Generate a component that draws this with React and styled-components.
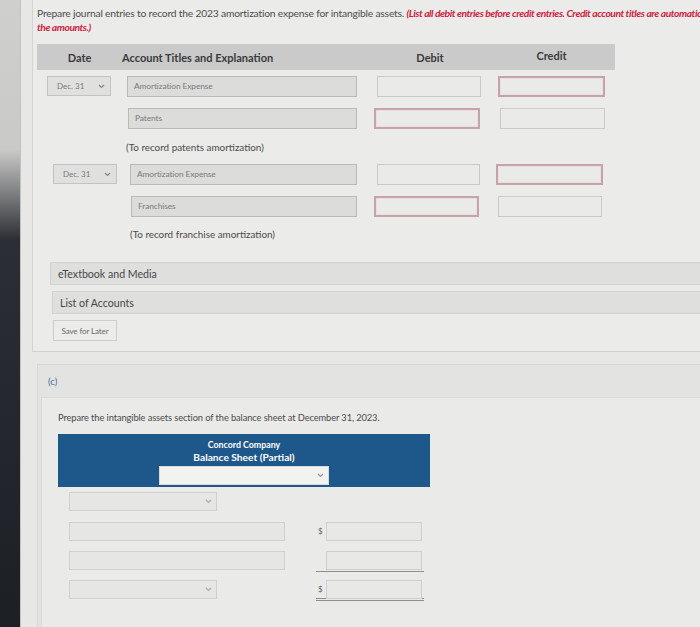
import React from "react";
import styled, { createGlobalStyle, css } from "styled-components";

const Global = createGlobalStyle`
  html, body { margin: 0; padding: 0; }
  body {
    background: #e7e7e5;
    font-family: Lato, "Open Sans", "Liberation Sans", sans-serif;
    color: #4a4a4a;
  }
`;

const Page = styled.div`
  display: flex;
  width: 700px;
  height: 627px;
  overflow: hidden;
  background: #e7e7e5;
`;

const Bezel = styled.div`
  flex: 0 0 20px;
  background: linear-gradient(
    to bottom,
    #cfcfcd 0px,
    #c9c9c7 150px,
    #2b2e34 240px,
    #1c1f24 100%
  );
  border-right: 1px solid #c2c2c0;
`;

const Main = styled.div`
  flex: 1;
  min-width: 0;
  padding-left: 11px;
  display: flex;
  flex-direction: column;
`;

const PanelB = styled.div`
  background: #ebebe9;
  border-left: 1px solid #d4d4d2;
  border-bottom: 1px solid #d2d2d0;
  padding: 6px 0 10px 4px;
  width: 700px;
`;

const Instr = styled.div`
  font-size: 10.3px;
  line-height: 14px;
  white-space: nowrap;
  overflow: hidden;
  color: #4d4d4d;
  letter-spacing: -0.2px;
`;

const Warn = styled.span`
  color: #cf1d43;
  font-style: italic;
  font-weight: 700;
  letter-spacing: -0.45px;
`;

const Grid = styled.div`
  display: grid;
  grid-template-columns: 85px 250px 116px 127px;
  width: 578px;
`;

const Head = styled(Grid)`
  margin-top: 10px;
  height: 26px;
  background: #c9cac9;
  align-items: center;
  font-weight: 700;
  font-size: 11px;
  color: #3a3a3a;
`;

const HeadCell = styled.div`
  text-align: ${(p) => p.$align || "center"};
  padding-bottom: ${(p) => (p.$up ? "3px" : "0")};
`;

const Row = styled(Grid)`
  margin-top: ${(p) => p.$mt}px;
  height: 22px;
  align-items: center;
`;

const DateSelect = styled.div`
  margin-left: ${(p) => p.$ml}px;
  width: 64px;
  height: 20px;
  box-sizing: border-box;
  border: 1px solid #c3c3c1;
  background: #e0e0de;
  display: flex;
  align-items: center;
  justify-content: space-between;
  padding: 0 5px 0 9px;
  font-size: 8px;
  color: #7a7a7a;
`;

const Chevron = styled.svg`
  width: 7px;
  height: 5px;
`;

const AcctInput = styled.div`
  margin-left: ${(p) => p.$ml}px;
  width: ${(p) => p.$w}px;
  height: 21px;
  box-sizing: border-box;
  border: 1px solid #b9b9b7;
  background: #dcdcda;
  display: flex;
  align-items: center;
  padding-left: 6px;
  font-size: 8.4px;
  color: #7b7b7b;
  letter-spacing: -0.1px;
`;

const Amt = styled.div`
  margin-left: ${(p) => p.$ml}px;
  width: ${(p) => p.$w}px;
  height: 21px;
  box-sizing: border-box;
  background: #eaeae8;
  ${(p) =>
    p.$err
      ? css`
          border: 2px solid #c6a3a8;
          box-shadow: inset 0 0 0 1px #ecdfe0;
        `
      : css`
          border: 1px solid #c9c9c7;
        `}
`;

const Explain = styled.div`
  margin: ${(p) => p.$mt}px 0 0 ${(p) => p.$ml}px;
  height: 12px;
  line-height: 12px;
  font-size: 9.9px;
  color: #4a4a4a;
`;

const Bar = styled.div`
  margin: ${(p) => p.$mt}px 0 0 ${(p) => p.$ml}px;
  height: 23px;
  box-sizing: border-box;
  border: 1px solid #d3d3d1;
  background: #dfdfdd;
  display: flex;
  align-items: center;
  padding-left: 7px;
  font-size: 10.6px;
  color: #474747;
`;

const SaveBtn = styled.div`
  margin: 6px 0 0 16px;
  width: 64px;
  height: 21px;
  box-sizing: border-box;
  border: 1px solid #cdcdcb;
  background: #ececea;
  display: flex;
  align-items: center;
  justify-content: center;
  font-size: 8px;
  color: #6a6a6a;
  letter-spacing: -0.1px;
`;

const SectionC = styled.div`
  margin: 12px 0 0 5px;
  background: #e3e3e1;
  border-top: 1px solid #d6d6d4;
  border-left: 1px solid #d6d6d4;
  padding: 11px 0 0 3px;
  flex: 1;
  display: flex;
  flex-direction: column;
`;

const Label = styled.div`
  margin-left: 7px;
  font-size: 9.5px;
  color: #3f6f92;
  height: 12px;
  line-height: 12px;
`;

const Inner = styled.div`
  margin-top: 9px;
  background: #eaeae8;
  border-top: 1px solid #dcdcda;
  border-left: 1px solid #d8d8d6;
  padding: 15px 0 0 16px;
  flex: 1;
`;

const Prompt = styled.div`
  font-size: 9.3px;
  color: #4a4a4a;
  height: 10px;
  line-height: 10px;
  letter-spacing: -0.1px;
`;

const Blue = styled.div`
  margin-top: 11px;
  width: 372px;
  height: 53px;
  background: #1e578a;
  display: flex;
  flex-direction: column;
  align-items: center;
  padding-top: 5px;
  box-sizing: border-box;
  color: #ffffff;
  font-weight: 700;
`;

const BlueLine = styled.div`
  font-size: ${(p) => p.$fs}px;
  line-height: 12px;
`;

const WhiteSelect = styled.div`
  margin-top: 3px;
  width: 170px;
  height: 19px;
  box-sizing: border-box;
  background: #f2f2f1;
  border: 1px solid #d9d9d9;
  display: flex;
  align-items: center;
  justify-content: flex-end;
  padding-right: 4px;
`;

const BsRows = styled.div`
  margin-left: 11px;
  display: flex;
  flex-direction: column;
`;

const BsRow = styled.div`
  display: flex;
  align-items: flex-start;
  margin-top: ${(p) => p.$mt}px;
  height: ${(p) => (p.$amt ? 21 : 19)}px;
`;

const BsField = styled.div`
  width: ${(p) => p.$w}px;
  height: 19px;
  box-sizing: border-box;
  border: 1px solid #d0d0ce;
  background: #e6e6e4;
  display: flex;
  align-items: center;
  justify-content: flex-end;
  padding-right: 4px;
  flex: none;
`;

const AmtCell = styled.div`
  margin-left: ${(p) => p.$ml}px;
  width: 108px;
  height: 21px;
  box-sizing: border-box;
  display: flex;
  align-items: flex-start;
  ${(p) =>
    p.$line === "single" &&
    css`
      border-bottom: 1px solid #8e8e8c;
    `}
  ${(p) =>
    p.$line === "double" &&
    css`
      border-bottom: 3px double #8e8e8c;
    `}
`;

const Dollar = styled.span`
  width: 8px;
  padding-left: 2px;
  font-size: 8px;
  line-height: 19px;
  color: #666;
`;

const AmtBox = styled.div`
  width: 96px;
  height: 19px;
  box-sizing: border-box;
  border: 1px solid #cfcfcd;
  background: #e8e8e6;
`;

const Down = ({ color = "#888" }) => (
  <Chevron viewBox="0 0 7 5">
    <path d="M1 1 L3.5 3.5 L6 1" fill="none" stroke={color} strokeWidth="1.2" />
  </Chevron>
);

export default function App() {
  return (
    <>
      <Global />
      <Page>
        <Bezel />
        <Main>
          <PanelB>
            <Instr>
              Prepare journal entries to record the 2023 amortization expense for intangible assets.{" "}
              <Warn>
                (List all debit entries before credit entries. Credit account titles are automatically indented
              </Warn>
            </Instr>
            <Instr>
              <Warn>the amounts.)</Warn>
            </Instr>

            <Head>
              <HeadCell>Date</HeadCell>
              <HeadCell $align="left">Account Titles and Explanation</HeadCell>
              <HeadCell>Debit</HeadCell>
              <HeadCell $up>Credit</HeadCell>
            </Head>

            <Row $mt={5}>
              <DateSelect $ml={10}>
                Dec. 31 <Down />
              </DateSelect>
              <AcctInput $ml={5} $w={230}>Amortization Expense</AcctInput>
              <Amt $ml={5} $w={104} />
              <Amt $ml={10} $w={107} $err />
            </Row>
            <Row $mt={10}>
              <div />
              <AcctInput $ml={6} $w={229}>Patents</AcctInput>
              <Amt $ml={2} $w={106} $err />
              <Amt $ml={12} $w={105} />
            </Row>
            <Explain $mt={12} $ml={89}>(To record patents amortization)</Explain>

            <Row $mt={10}>
              <DateSelect $ml={16}>
                Dec. 31 <Down />
              </DateSelect>
              <AcctInput $ml={8} $w={227}>Amortization Expense</AcctInput>
              <Amt $ml={5} $w={103} />
              <Amt $ml={8} $w={107} $err />
            </Row>
            <Row $mt={10}>
              <div />
              <AcctInput $ml={9} $w={226}>Franchises</AcctInput>
              <Amt $ml={2} $w={105} $err />
              <Amt $ml={10} $w={104} />
            </Row>
            <Explain $mt={11} $ml={93}>(To record franchise amortization)</Explain>

            <Bar $mt={22} $ml={13}>eTextbook and Media</Bar>
            <Bar $mt={6} $ml={15}>List of Accounts</Bar>
            <SaveBtn>Save for Later</SaveBtn>
          </PanelB>

          <SectionC>
            <Label>(c)</Label>
            <Inner>
              <Prompt>Prepare the intangible assets section of the balance sheet at December 31, 2023.</Prompt>
              <Blue>
                <BlueLine $fs={8.8}>Concord Company</BlueLine>
                <BlueLine $fs={10.2}>Balance Sheet (Partial)</BlueLine>
                <WhiteSelect>
                  <Down color="#999" />
                </WhiteSelect>
              </Blue>
              <BsRows>
                <BsRow $mt={5}>
                  <BsField $w={148}>
                    <Down color="#aaa" />
                  </BsField>
                </BsRow>
                <BsRow $mt={11} $amt>
                  <BsField $w={216} />
                  <AmtCell $ml={31}>
                    <Dollar>$</Dollar>
                    <AmtBox />
                  </AmtCell>
                </BsRow>
                <BsRow $mt={8} $amt>
                  <BsField $w={216} />
                  <AmtCell $ml={31} $line="single">
                    <Dollar />
                    <AmtBox />
                  </AmtCell>
                </BsRow>
                <BsRow $mt={8} $amt>
                  <BsField $w={148}>
                    <Down color="#aaa" />
                  </BsField>
                  <AmtCell $ml={99} $line="double">
                    <Dollar>$</Dollar>
                    <AmtBox />
                  </AmtCell>
                </BsRow>
              </BsRows>
            </Inner>
          </SectionC>
        </Main>
      </Page>
    </>
  );
}
